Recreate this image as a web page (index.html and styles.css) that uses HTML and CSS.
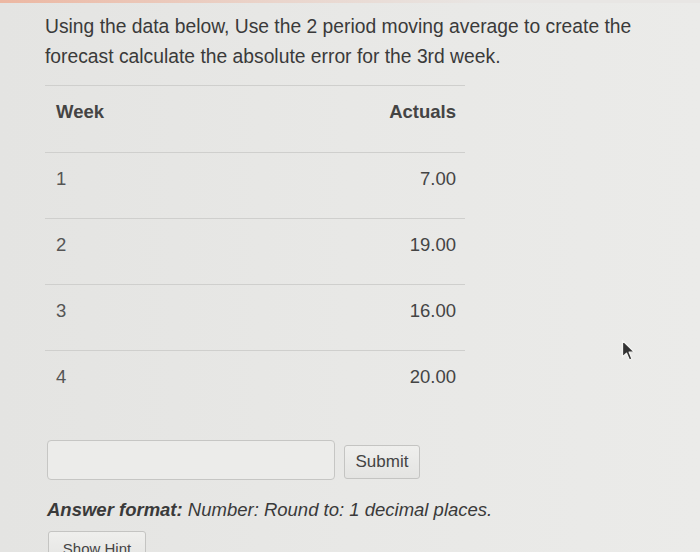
FILE: index.html
```html
<!DOCTYPE html>
<html>
<head>
<meta charset="utf-8">
<link rel="stylesheet" href="styles.css">
</head>
<body>
<div class="topbar"></div>
<main class="page">
  <p class="question">Using the data below, Use the 2 period moving average to create the forecast calculate the absolute error for the 3rd week.</p>
  <table class="data">
    <thead>
      <tr><th class="c-week">Week</th><th class="c-act">Actuals</th></tr>
    </thead>
    <tbody>
      <tr><td class="c-week">1</td><td class="c-act">7.00</td></tr>
      <tr><td class="c-week">2</td><td class="c-act">19.00</td></tr>
      <tr><td class="c-week">3</td><td class="c-act">16.00</td></tr>
      <tr class="last"><td class="c-week">4</td><td class="c-act">20.00</td></tr>
    </tbody>
  </table>
  <div class="answer-row">
    <input class="answer" type="text">
    <button class="btn submit">Submit</button>
  </div>
  <p class="format"><b>Answer format:</b> Number: Round to: 1 decimal places.</p>
  <button class="btn hint">Show Hint</button>
</main>
<svg class="cursor" width="16" height="24" viewBox="0 0 16 24"><path d="M1.5 1.5 L1.5 18 L5.5 14.2 L8.4 21 L11 19.9 L8.2 13.2 L13.6 13.2 Z" fill="#333" stroke="#f4f4f2" stroke-width="1.3" stroke-linejoin="round"/></svg>
</body>
</html>
```

FILE: styles.css
```css
html, body {
  margin: 0;
  padding: 0;
  height: 100%;
  overflow: hidden;
}
body {
  background: linear-gradient(90deg, #e4e4e2 0%, #e8e8e6 50%, #ebebe9 100%);
  font-family: "Liberation Sans", Arial, sans-serif;
  color: #3b3b3b;
  position: relative;
}
.topbar {
  height: 3px;
  background: linear-gradient(90deg, #ecb7a2 0%, #ead5cc 40%, #e8e6e4 70%);
}
.page {
  padding: 9px 0 0 45px;
}
.question {
  margin: 0;
  width: 620px;
  font-size: 19.3px;
  line-height: 30px;
  color: #3a3a3a;
}
.data {
  margin-top: 13px;
  width: 420px;
  border-collapse: collapse;
  font-size: 18.5px;
}
.data th, .data td {
  border-top: 1px solid #cfcfcd;
  height: 66px;
  padding: 14.5px 0 0 0;
  vertical-align: top;
  line-height: 22px;
  box-sizing: border-box;
}
.data th {
  height: 67px;
  padding-top: 15px;
  font-weight: bold;
  color: #444;
}
.data td {
  color: #444;
}
.data td.c-week {
  color: #555;
}
.data .c-week {
  text-align: left;
  padding-left: 11px;
}
.data .c-act {
  text-align: right;
  padding-right: 9px;
}
.answer-row {
  display: flex;
  align-items: flex-start;
  margin-top: 23px;
  margin-left: 2px;
  gap: 9px;
}
.answer {
  width: 288px;
  height: 40px;
  box-sizing: border-box;
  border: 1px solid #c6c6c4;
  border-radius: 4px;
  background: #ececea;
  margin: 0;
}
.btn {
  font-family: "Liberation Sans", Arial, sans-serif;
  color: #444;
  background: linear-gradient(#efefed, #e4e4e2);
  border: 1px solid #c4c4c2;
  border-radius: 3px;
  box-sizing: border-box;
  margin: 0;
  padding: 0;
}
.submit {
  width: 76px;
  height: 34px;
  font-size: 17px;
  margin-top: 5px;
}
.format {
  margin: 18px 0 0 2px;
  font-size: 18.5px;
  font-style: italic;
  line-height: 24px;
  color: #3a3a3a;
}
.hint {
  display: block;
  margin: 9px 0 0 3px;
  width: 98px;
  height: 34px;
  font-size: 15px;
  padding-top: 2px;
  line-height: 20px;
}
.cursor {
  position: absolute;
  left: 621px;
  top: 339px;
}
```
